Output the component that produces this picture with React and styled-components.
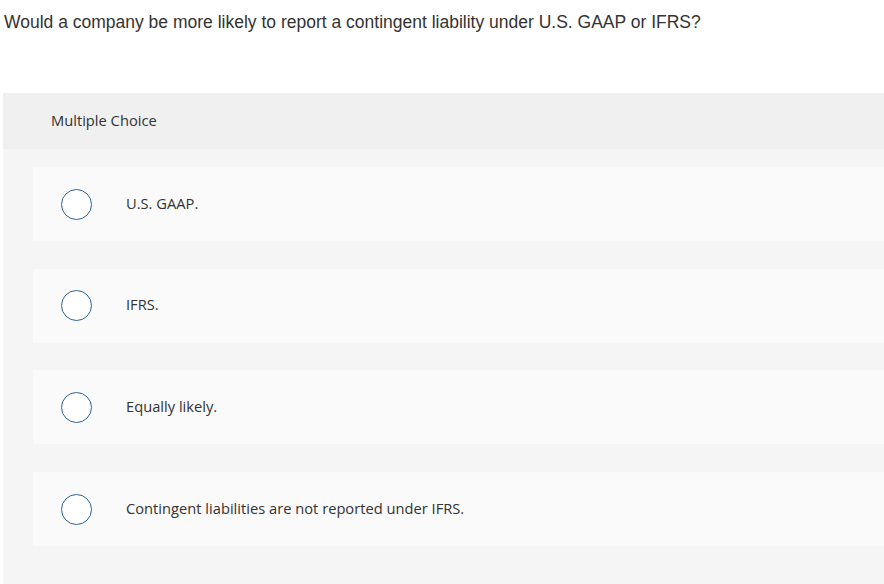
import React from 'react';
import styled, { createGlobalStyle } from 'styled-components';

const GlobalStyle = createGlobalStyle`
    html, body {
        margin: 0;
        padding: 0;
        background: #ffffff;
        overflow: hidden;
    }
`;

const Page = styled.div`
    width: 884px;
    height: 584px;
    font-family: "Open Sans", "Liberation Sans", sans-serif;
    color: #333333;
`;

const Question = styled.p`
    margin: 0;
    padding: 12px 0 0 4px;
    font-family: "Liberation Sans", Arial, sans-serif;
    font-size: 17.5px;
    line-height: 20px;
    color: #333333;
`;

const Panel = styled.section`
    margin: 61px 0 0 3px;
    background: #f5f5f5;
    height: 491px;
`;

const PanelHeader = styled.div`
    height: 56px;
    display: flex;
    align-items: center;
    padding-left: 48px;
    padding-bottom: 2px;
    box-sizing: border-box;
    background: #f0f0f0;
    font-size: 14.7px;
    color: #333333;
`;

const Choices = styled.div`
    display: flex;
    flex-direction: column;
    gap: 27.7px;
    padding: 18px 0 0 30px;
`;

const Choice = styled.label`
    display: flex;
    align-items: center;
    gap: 34px;
    height: 74px;
    padding-left: 28px;
    background: #fafafa;
    font-size: 14.7px;
    color: #333333;
    cursor: pointer;
`;

const Radio = styled.span`
    box-sizing: border-box;
    width: 31px;
    height: 31px;
    border-radius: 50%;
    border: 1.5px solid #2c6399;
    background: #ffffff;
    flex-shrink: 0;
`;

const ChoiceText = styled.span`
    margin-bottom: 3px;
`;

const options = [
    'U.S. GAAP.',
    'IFRS.',
    'Equally likely.',
    'Contingent liabilities are not reported under IFRS.',
];

export default function App() {
    return (
        <Page>
            <GlobalStyle />
            <Question>Would a company be more likely to report a contingent liability under U.S. GAAP or IFRS?</Question>
            <Panel>
                <PanelHeader>Multiple Choice</PanelHeader>
                <Choices>
                    {options.map(text => (
                        <Choice key={text}>
                            <Radio />
                            <ChoiceText>{text}</ChoiceText>
                        </Choice>
                    ))}
                </Choices>
            </Panel>
        </Page>
    );
}
